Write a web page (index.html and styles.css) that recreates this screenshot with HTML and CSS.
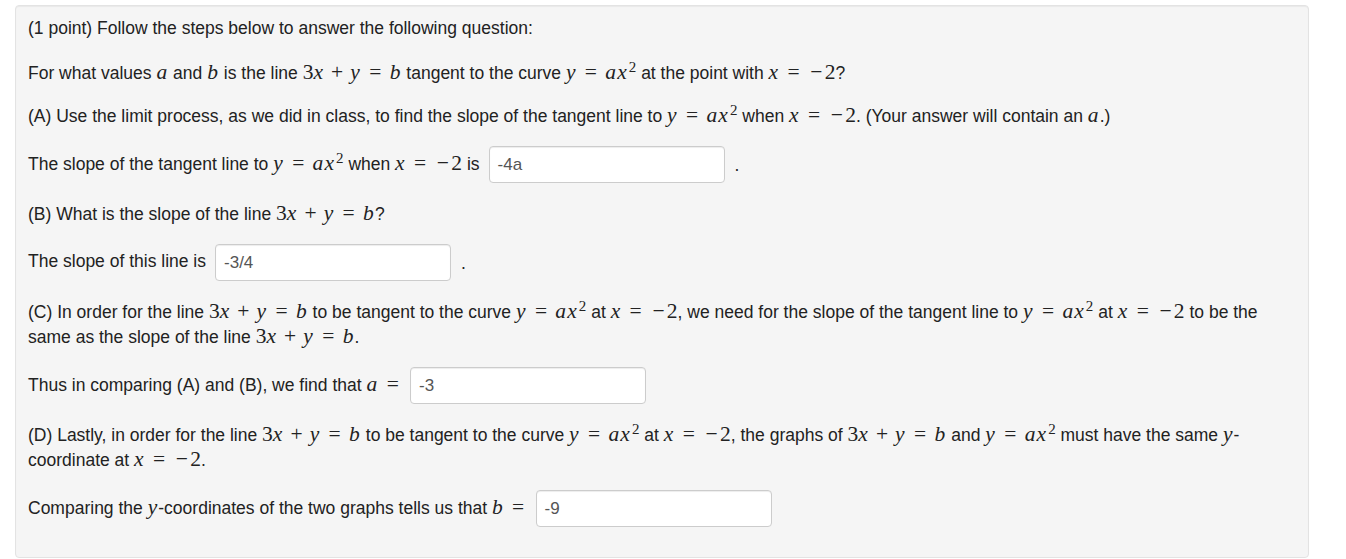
FILE: index.html
```html
<!DOCTYPE html>
<html>
<head>
<meta charset="utf-8">
<link rel="stylesheet" href="styles.css">
</head>
<body>
<div class="well">
  <p>(1 point) Follow the steps below to answer the following question:</p>
  <p class="tight">For what values <span class="m"><i>a</i></span> and <span class="m"><i>b</i></span> is the line <span class="m">3<i>x</i><span class="bin">+</span><i>y</i><span class="rel">=</span><i>b</i></span> tangent to the curve <span class="m"><i>y</i><span class="rel">=</span><i>a</i><i>x</i><sup>2</sup></span> at the point with <span class="m"><i>x</i><span class="rel">=</span><span class="neg">−</span>2</span>?</p>
  <p>(A) Use the limit process, as we did in class, to find the slope of the tangent line to <span class="m"><i>y</i><span class="rel">=</span><i>a</i><i>x</i><sup>2</sup></span> when <span class="m"><i>x</i><span class="rel">=</span><span class="neg">−</span>2</span>. (Your answer will contain an <span class="m"><i>a</i></span>.)</p>
  <p class="ans"><span class="lbl">The slope of the tangent line to <span class="m"><i>y</i><span class="rel">=</span><i>a</i><i>x</i><sup>2</sup></span> when <span class="m"><i>x</i><span class="rel">=</span><span class="neg">−</span>2</span> is</span><span class="inp">-4a</span><span class="dot">.</span></p>
  <p>(B) What is the slope of the line <span class="m">3<i>x</i><span class="bin">+</span><i>y</i><span class="rel">=</span><i>b</i></span>?</p>
  <p class="ans"><span class="lbl">The slope of this line is</span><span class="inp">-3/4</span><span class="dot">.</span></p>
  <p>(C) In order for the line <span class="m">3<i>x</i><span class="bin">+</span><i>y</i><span class="rel">=</span><i>b</i></span> to be tangent to the curve <span class="m"><i>y</i><span class="rel">=</span><i>a</i><i>x</i><sup>2</sup></span> at <span class="m"><i>x</i><span class="rel">=</span><span class="neg">−</span>2</span>, we need for the slope of the tangent line to <span class="m"><i>y</i><span class="rel">=</span><i>a</i><i>x</i><sup>2</sup></span> at <span class="m"><i>x</i><span class="rel">=</span><span class="neg">−</span>2</span> to be the same as the slope of the line <span class="m">3<i>x</i><span class="bin">+</span><i>y</i><span class="rel">=</span><i>b</i></span>.</p>
  <p class="ans"><span class="lbl">Thus in comparing (A) and (B), we find that <span class="m"><i>a</i><span class="rel end">=</span></span></span><span class="inp">-3</span></p>
  <p>(D) Lastly, in order for the line <span class="m">3<i>x</i><span class="bin">+</span><i>y</i><span class="rel">=</span><i>b</i></span> to be tangent to the curve <span class="m"><i>y</i><span class="rel">=</span><i>a</i><i>x</i><sup>2</sup></span> at <span class="m"><i>x</i><span class="rel">=</span><span class="neg">−</span>2</span>, the graphs of <span class="m">3<i>x</i><span class="bin">+</span><i>y</i><span class="rel">=</span><i>b</i></span> and <span class="m"><i>y</i><span class="rel">=</span><i>a</i><i>x</i><sup>2</sup></span> must have the same <span class="m"><i>y</i></span>-coordinate at <span class="m"><i>x</i><span class="rel">=</span><span class="neg">−</span>2</span>.</p>
  <p class="ans"><span class="lbl">Comparing the <span class="m"><i>y</i></span>-coordinates of the two graphs tells us that <span class="m"><i>b</i><span class="rel end">=</span></span></span><span class="inp">-9</span></p>
</div>
</body>
</html>
```
FILE: styles.css
```css
html, body {
  margin: 0;
  padding: 0;
  background: #ffffff;
}
body {
  font-family: "Liberation Sans", Arial, sans-serif;
  font-size: 17.5px;
  color: #222222;
}
.well {
  box-sizing: border-box;
  width: 1294px;
  height: 553px;
  margin: 5px 0 0 15px;
  padding: 10px 12px 0 12px;
  background: #f5f5f5;
  border: 1px solid #e3e3e3;
  border-radius: 4px;
  box-shadow: inset 0 1px 1px rgba(0, 0, 0, 0.05);
}
p {
  margin: 0 0 20px 0;
  line-height: 24px;
}
p.tight {
  margin-bottom: 18px;
}
p.ans {
  display: flex;
  align-items: center;
  height: 37px;
  margin: -2px 0 18px 0;
}
.lbl {
  line-height: 24px;
  margin-top: -3px;
}
.m {
  font-family: "Liberation Serif", "Times New Roman", serif;
  font-size: 21.5px;
  white-space: nowrap;
}
.m i {
  font-style: italic;
  letter-spacing: 0.05em;
}
.m sup {
  font-size: 15px;
  line-height: 0;
  vertical-align: 7px;
  margin-left: 1px;
}
.bin,
.rel,
.neg {
  display: inline-block;
  width: 0.78em;
  text-align: center;
  line-height: 1;
}
.bin {
  margin: 0 0.22em;
}
.rel {
  margin: 0 0.28em;
}
.rel.end {
  margin-right: 0;
}
.inp {
  display: block;
  box-sizing: border-box;
  width: 236px;
  height: 37px;
  padding: 0 8px;
  line-height: 35px;
  background: #ffffff;
  border: 1px solid #cccccc;
  border-radius: 4px;
  box-shadow: inset 0 1px 1px rgba(0, 0, 0, 0.075);
  font-size: 17px;
  color: #555555;
  margin-left: 9px;
}
.dot {
  margin-left: 10px;
}
```
